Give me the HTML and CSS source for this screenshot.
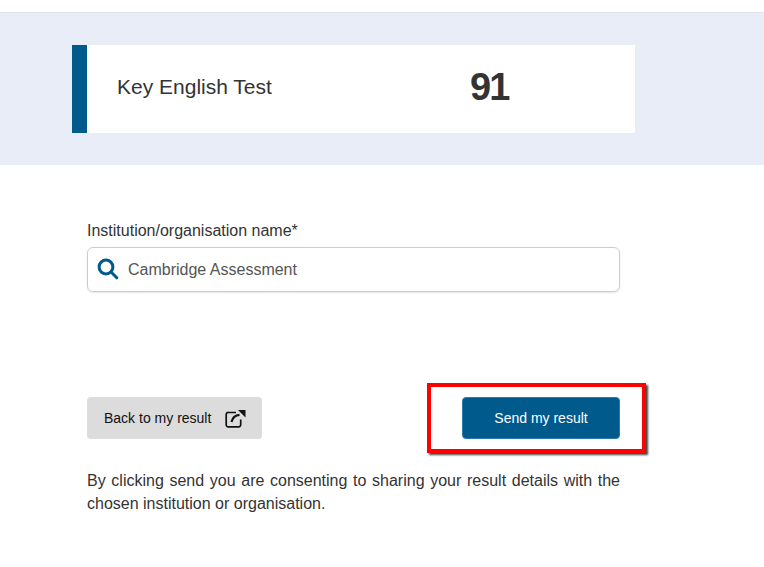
FILE: index.html

```html
<!DOCTYPE html>
<html lang="en">
<head>
    <meta charset="UTF-8">
    <meta name="viewport" content="width=device-width, initial-scale=1.0">
    <title>Send my result</title>
    <link rel="stylesheet" href="styles.css">
</head>
<body>
    <div class="score-band">
        <div class="score-card">
            <div class="score-name">Key English Test</div>
            <div class="score-value">91</div>
        </div>
    </div>

    <div class="content">
        <label class="field-label" for="institution">Institution/organisation name*</label>
        <div class="search-field">
            <svg class="search-icon" width="22" height="22" viewBox="0 0 22 22">
                <circle cx="9" cy="9" r="6.9" fill="none" stroke="#005a8c" stroke-width="3"></circle>
                <path d="M14 14 L19.8 19.8" fill="none" stroke="#005a8c" stroke-width="3" stroke-linecap="round"></path>
            </svg>
            <input type="text" id="institution" value="Cambridge Assessment">
        </div>

        <div class="actions">
            <button class="btn btn-back">
                Back to my result
                <svg width="21" height="19" viewBox="0 0 21 19">
                    <path d="M11 3.5 H3.5 A2 2 0 0 0 1.2 5.5 V15.5 A2 2 0 0 0 3.5 17.8 H13.5 A2 2 0 0 0 15.7 15.5 V10.5" fill="none" stroke="#111" stroke-width="1.7"></path>
                    <path d="M6.5 13 C7.5 8.5 10.5 6 14.5 5.8" fill="none" stroke="#111" stroke-width="2.2"></path>
                    <path d="M13 1 H20.5 V8.5 Z" fill="#111"></path>
                </svg>
            </button>
            <div class="send-wrap">
                <button class="btn btn-send">Send my result</button>
                <div class="highlight"></div>
            </div>
        </div>

        <p class="consent">By clicking send you are consenting to sharing your result details with the chosen institution or organisation.</p>
    </div>
</body>
</html>
```

FILE: styles.css

```css
:root {
    --brand-blue: #005a8c;
    --band-bg: #e9edf8;
    --text-color: #333;
}
html, body {
    height: 100%;
}
body {
    font-family: "Liberation Sans", Arial, sans-serif;
    font-size: 16px;
    color: var(--text-color);
    background-color: #fff;
    margin: 0;
    padding: 12px 0 0;
    box-sizing: border-box;
    overflow: hidden;
}
.score-band {
    background-color: var(--band-bg);
    border-top: 1px solid #e0e2e8;
    padding: 32px 0 32px 72px;
}
.score-card {
    display: flex;
    align-items: center;
    box-sizing: border-box;
    width: 563px;
    height: 88px;
    padding-bottom: 4px;
    background-color: #fff;
    border-left: 15px solid var(--brand-blue);
}
.score-name {
    width: 353px;
    padding-left: 30px;
    font-size: 21px;
}
.score-value {
    font-size: 38px;
    font-weight: bold;
    letter-spacing: -2px;
}
.content {
    width: 533px;
    margin-left: 87px;
    padding-top: 56px;
}
.field-label {
    display: block;
    line-height: 20px;
    margin-bottom: 6px;
}
.search-field {
    display: flex;
    align-items: center;
    height: 45px;
    box-sizing: border-box;
    padding-left: 9px;
    border: 1px solid #ccc;
    border-radius: 6px;
    box-shadow: 0 1px 2px rgba(0, 0, 0, 0.1);
}
.search-icon {
    margin-right: 9px;
    margin-bottom: 2px;
}
.search-field input {
    flex: 1;
    border: none;
    outline: none;
    padding: 0;
    font: inherit;
    color: #555;
}
.actions {
    display: flex;
    justify-content: space-between;
    margin-top: 105px;
}
.btn {
    height: 42px;
    font-family: inherit;
    font-size: 14px;
    border: none;
    border-radius: 4px;
    cursor: pointer;
}
.btn-back {
    display: flex;
    align-items: center;
    gap: 14px;
    width: 175px;
    padding: 0 0 0 17px;
    background-color: #dcdcdc;
    color: #111;
}
.btn-send {
    display: block;
    width: 158px;
    background-color: var(--brand-blue);
    color: #fff;
    border: 1px solid #2a79a8;
}
.send-wrap {
    position: relative;
}
.highlight {
    position: absolute;
    left: -35px;
    top: -14px;
    width: 211px;
    height: 62px;
    border: 4px solid #f00;
    box-shadow: 2px 2px 2px rgba(0, 0, 0, 0.75);
    pointer-events: none;
}
.consent {
    margin: 30px 0 0;
    line-height: 23px;
    text-align: justify;
}
```
